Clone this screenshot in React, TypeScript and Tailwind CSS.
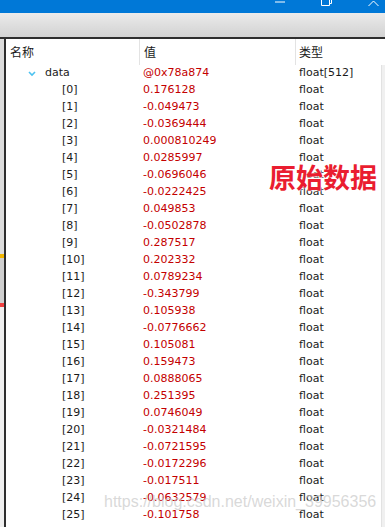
import React from "react";

const rows: [string, string][] = [
  ["[0]", "0.176128"],
  ["[1]", "-0.049473"],
  ["[2]", "-0.0369444"],
  ["[3]", "0.000810249"],
  ["[4]", "0.0285997"],
  ["[5]", "-0.0696046"],
  ["[6]", "-0.0222425"],
  ["[7]", "0.049853"],
  ["[8]", "-0.0502878"],
  ["[9]", "0.287517"],
  ["[10]", "0.202332"],
  ["[11]", "0.0789234"],
  ["[12]", "-0.343799"],
  ["[13]", "0.105938"],
  ["[14]", "-0.0776662"],
  ["[15]", "0.105081"],
  ["[16]", "0.159473"],
  ["[17]", "0.0888065"],
  ["[18]", "0.251395"],
  ["[19]", "0.0746049"],
  ["[20]", "-0.0321484"],
  ["[21]", "-0.0721595"],
  ["[22]", "-0.0172296"],
  ["[23]", "-0.017511"],
  ["[24]", "-0.0632579"],
  ["[25]", "-0.101758"],
  ["", ""],
];

const font = { fontFamily: '"DejaVu Sans", "Noto Sans CJK SC", sans-serif' };
const cjk = { fontFamily: '"Noto Sans CJK SC", sans-serif' };

function TitleBar() {
  return (
    <div className="h-[13px] shrink-0 bg-[#0078d7] flex items-start justify-end overflow-hidden">
      <svg width="10" height="3" className="mr-[36px] mt-[1px]">
        <line x1="0" y1="1" x2="10" y2="1" stroke="white" strokeWidth="1" />
      </svg>
      <svg width="11" height="7" className="mr-[36px]">
        <path d="M0.5 -3 V5.5 H8.5 V-3 M8.5 3.5 H10.5 V-5" stroke="white" fill="none" strokeWidth="1" />
      </svg>
      <svg width="11" height="7" className="mr-[6px]">
        <path d="M0.5 6 L5.5 1 L10.5 6" stroke="white" fill="none" strokeWidth="1" />
      </svg>
    </div>
  );
}

export default function App() {
  return (
    <div className="relative w-[385px] h-[527px] overflow-hidden bg-white text-[11px] text-[#1a1a1a] flex flex-col" style={font}>
      <TitleBar />
      <div className="h-[24px] shrink-0 bg-gradient-to-b from-[#ebebeb] to-[#d2d2d2]" />
      <div className="flex flex-1 min-h-0 border-t-2 border-[#2e2e2e]">
        <div className="w-[4px] flex flex-col bg-[#dcdcdc]">
          <div className="h-[215px]" />
          <div className="h-[4px] bg-[#f2b600]" />
          <div className="h-[45px] bg-[#cfcfcf]" />
          <div className="h-[4px] bg-[#f04040]" />
          <div className="flex-1 bg-[#efefef]" />
        </div>
        <div className="w-[2px] bg-[#2e2e2e]" />
        <div className="flex-1 flex flex-col overflow-hidden">
          <div className="h-[26px] shrink-0 flex items-center text-[12px]" style={cjk}>
            <div className="w-[134px] h-full flex items-center pl-[4px] border-r border-[#e3e3e3]">名称</div>
            <div className="w-[156px] h-full flex items-center pl-[4px] border-r border-[#e3e3e3]">值</div>
            <div className="flex-1 h-full flex items-center pl-[3px]">类型</div>
          </div>
          <div className="flex h-[17px] shrink-0 items-center">
            <div className="w-[134px] flex items-center">
              <svg width="8" height="6" className="ml-[22px] mr-[9px]">
                <path d="M1 1 L4 4 L7 1" stroke="#4cc2f0" strokeWidth="1.6" fill="none" />
              </svg>
              <span>data</span>
            </div>
            <div className="w-[156px] pl-[3px] text-[#c40000]">@0x78a874</div>
            <div className="flex-1 pl-[3px]">float[512]</div>
          </div>
          {rows.map(([idx, val], i) => (
            <div key={i} className="flex h-[17px] shrink-0 items-center">
              <div className="w-[134px] pl-[56px]">{idx}</div>
              <div className="w-[156px] pl-[3px] text-[#c40000]">{val}</div>
              <div className="flex-1 pl-[3px]">float</div>
            </div>
          ))}
        </div>
        <div className="w-[4px] mt-[26px] bg-[#f0f0f0] border-l border-[#e2e2e2]" />
      </div>
      <div
        className="absolute left-[269px] top-[163px] text-[27px] font-bold text-[#ea1d30] leading-none"
        style={{ ...cjk, textShadow: "0 0 2px #fff, 0 0 2px #fff" }}
      >
        原始数据
      </div>
      <div
        className="absolute left-[104px] top-[494px] text-[16px] text-[#c8c8c8]/70 leading-none"
        style={{ fontFamily: '"Liberation Sans", sans-serif' }}
      >
        https://blog.csdn.net/weixin_39956356
      </div>
    </div>
  );
}
